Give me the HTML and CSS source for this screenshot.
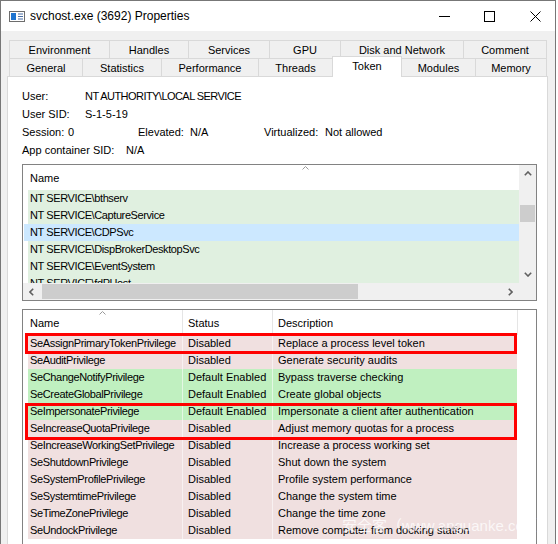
FILE: index.html
```html
<!DOCTYPE html>
<html lang="en">
<head>
    <meta charset="UTF-8">
    <title>svchost.exe (3692) Properties</title>
    <link rel="stylesheet" href="styles.css">
</head>
<body>
<div class="window">
    <div class="titlebar">
        <svg class="app-icon" width="16" height="11" viewBox="0 0 16 11">
            <rect x="0.5" y="0.5" width="15" height="10" fill="#fff" stroke="#6d6d6d"/>
            <rect x="2" y="2" width="5" height="7" fill="#1f74d0"/>
            <rect x="9" y="2.5" width="5" height="1" fill="#4a6fa5"/>
            <rect x="9" y="5" width="5" height="1" fill="#4a6fa5"/>
            <rect x="9" y="7.5" width="5" height="1" fill="#4a6fa5"/>
        </svg>
        <span class="title">svchost.exe (3692) Properties</span>
        <div class="controls">
            <svg width="11" height="11" viewBox="0 0 11 11"><line x1="0" y1="5.5" x2="11" y2="5.5" stroke="#000"/></svg>
            <svg width="11" height="11" viewBox="0 0 11 11"><rect x="0.5" y="0.5" width="10" height="10" fill="none" stroke="#000"/></svg>
            <svg width="11" height="11" viewBox="0 0 11 11"><path d="M0.5 0.5 L10.5 10.5 M10.5 0.5 L0.5 10.5" stroke="#000"/></svg>
        </div>
    </div>

    <div class="client">
        <div class="tabs">
            <div class="tab-row">
                <div class="tab w-env">Environment</div>
                <div class="tab w-handles">Handles</div>
                <div class="tab w-services">Services</div>
                <div class="tab w-gpu">GPU</div>
                <div class="tab w-disk">Disk and Network</div>
                <div class="tab w-comment last">Comment</div>
            </div>
            <div class="tab-row">
                <div class="tab w-general">General</div>
                <div class="tab w-stats">Statistics</div>
                <div class="tab w-perf">Performance</div>
                <div class="tab w-threads">Threads</div>
                <div class="tab w-token active">Token</div>
                <div class="tab w-modules">Modules</div>
                <div class="tab w-memory last">Memory</div>
            </div>
        </div>

        <div class="panel">
            <div class="info">
                <div class="info-row"><span class="lbl-user">User:</span><span class="caps">NT AUTHORITY\LOCAL SERVICE</span></div>
                <div class="info-row"><span class="lbl-user">User SID:</span><span>S-1-5-19</span></div>
                <div class="info-row">
                    <div class="grp-session"><span class="lbl-session">Session:</span><span>0</span></div>
                    <div class="grp-elev"><span class="lbl-elev">Elevated:</span><span>N/A</span></div>
                    <span class="lbl-virt">Virtualized:</span><span>Not allowed</span>
                </div>
                <div class="info-row"><span class="lbl-app">App container SID:</span><span>N/A</span></div>
            </div>

            <div class="listbox groups">
                <div class="list">
                    <div class="list-inner">
                        <div class="lv-header">
                            <span class="hdr-text">Name</span>
                            <svg class="sort-arrow" width="7" height="4" viewBox="0 0 7 4"><polyline points="0.5,3.5 3.5,0.5 6.5,3.5" fill="none" stroke="#9a9a9a"/></svg>
                        </div>
                        <div class="grow">NT SERVICE\bthserv</div>
                        <div class="grow">NT SERVICE\CaptureService</div>
                        <div class="grow sel">NT SERVICE\CDPSvc</div>
                        <div class="grow">NT SERVICE\DispBrokerDesktopSvc</div>
                        <div class="grow">NT SERVICE\EventSystem</div>
                        <div class="grow">NT SERVICE\fdPHost</div>
                    </div>
                </div>
                <div class="vscroll">
                    <div class="sb-btn">
                        <svg width="8" height="5" viewBox="0 0 8 5"><polyline points="0.8,4.2 4,1 7.2,4.2" fill="none" stroke="#606060" stroke-width="1.6"/></svg>
                    </div>
                    <div class="vthumb"></div>
                    <div class="sb-btn bottom">
                        <svg width="8" height="5" viewBox="0 0 8 5"><polyline points="0.8,0.8 4,4 7.2,0.8" fill="none" stroke="#606060" stroke-width="1.6"/></svg>
                    </div>
                </div>
                <div class="hscroll">
                    <div class="sb-btn">
                        <svg width="5" height="8" viewBox="0 0 5 8"><polyline points="4.2,0.8 1,4 4.2,7.2" fill="none" stroke="#606060" stroke-width="1.6"/></svg>
                    </div>
                    <div class="hthumb"></div>
                    <div class="sb-btn right">
                        <svg width="5" height="8" viewBox="0 0 5 8"><polyline points="0.8,0.8 4,4 0.8,7.2" fill="none" stroke="#606060" stroke-width="1.6"/></svg>
                    </div>
                </div>
                <div class="corner"></div>
            </div>

            <div class="listbox privs">
                <div class="pv-header">
                    <div class="hc name">Name
                        <svg class="sort-arrow" width="7" height="4" viewBox="0 0 7 4"><polyline points="0.5,3.5 3.5,0.5 6.5,3.5" fill="none" stroke="#9a9a9a"/></svg>
                    </div>
                    <div class="hc status">Status</div>
                    <div class="hc desc">Description</div>
                </div>
                <div class="prow off"><div class="c name">SeAssignPrimaryTokenPrivilege</div><div class="c status">Disabled</div><div class="c desc">Replace a process level token</div></div>
                <div class="prow off"><div class="c name">SeAuditPrivilege</div><div class="c status">Disabled</div><div class="c desc">Generate security audits</div></div>
                <div class="prow on"><div class="c name">SeChangeNotifyPrivilege</div><div class="c status">Default Enabled</div><div class="c desc">Bypass traverse checking</div></div>
                <div class="prow on"><div class="c name">SeCreateGlobalPrivilege</div><div class="c status">Default Enabled</div><div class="c desc">Create global objects</div></div>
                <div class="prow on"><div class="c name">SeImpersonatePrivilege</div><div class="c status">Default Enabled</div><div class="c desc">Impersonate a client after authentication</div></div>
                <div class="prow off"><div class="c name">SeIncreaseQuotaPrivilege</div><div class="c status">Disabled</div><div class="c desc">Adjust memory quotas for a process</div></div>
                <div class="prow off"><div class="c name">SeIncreaseWorkingSetPrivilege</div><div class="c status">Disabled</div><div class="c desc">Increase a process working set</div></div>
                <div class="prow off"><div class="c name">SeShutdownPrivilege</div><div class="c status">Disabled</div><div class="c desc">Shut down the system</div></div>
                <div class="prow off"><div class="c name">SeSystemProfilePrivilege</div><div class="c status">Disabled</div><div class="c desc">Profile system performance</div></div>
                <div class="prow off"><div class="c name">SeSystemtimePrivilege</div><div class="c status">Disabled</div><div class="c desc">Change the system time</div></div>
                <div class="prow off"><div class="c name">SeTimeZonePrivilege</div><div class="c status">Disabled</div><div class="c desc">Change the time zone</div></div>
                <div class="prow off"><div class="c name">SeUndockPrivilege</div><div class="c status">Disabled</div><div class="c desc">Remove computer from docking station</div></div>

                <div class="mark mark-1"></div>
                <div class="mark mark-2"></div>
            </div>
        </div>
    </div>

    <div class="watermark">安全客（www.anguanke.com）</div>
</div>
</body>
</html>
```

FILE: styles.css
```css
:root {
    --face: #f0f0f0;
    --tab-border: #d9d9d9;
    --list-border: #828282;
    --thumb: #cdcdcd;
    --group-on: #e0f0e0;
    --selected: #cce8ff;
    --priv-off: #f0e0e0;
    --priv-on: #c0f0c0;
}

html, body {
    margin: 0;
    padding: 0;
    background: #fff;
}

body {
    font-family: "Liberation Sans", Arial, sans-serif;
    font-size: 11px;
    color: #000;
}

.window {
    position: relative;
    width: 556px;
    height: 544px;
    box-sizing: border-box;
    border: 1px solid #777;
    border-bottom: none;
    display: flex;
    flex-direction: column;
    overflow: hidden;
}

/* title bar */
.titlebar {
    height: 30px;
    flex: none;
    display: flex;
    align-items: center;
    padding-left: 8px;
    background: #fff;
}

.app-icon {
    margin-top: 1px;
}

.title {
    margin-left: 5px;
    font-size: 12px;
}

.controls {
    margin-left: auto;
    display: flex;
    align-items: center;
    gap: 34px;
    padding-right: 14px;
}

.controls svg:last-child {
    margin-left: 1px;
}

/* client area */
.client {
    flex: 1;
    display: flex;
    flex-direction: column;
    background: var(--face);
    padding: 9px 7px 0 6px;
    min-height: 0;
}

.tabs {
    margin-left: 2px;
}

.tab-row {
    display: flex;
    height: 18px;
    align-items: flex-start;
}

.tab {
    height: 18px;
    box-sizing: border-box;
    border-top: 1px solid var(--tab-border);
    border-left: 1px solid var(--tab-border);
    display: flex;
    align-items: center;
    justify-content: center;
    white-space: nowrap;
}

.tab.last {
    border-right: 1px solid var(--tab-border);
}

.tab.active {
    position: relative;
    z-index: 1;
    height: 21px;
    margin-top: -2px;
    margin-right: -1px;
    padding-bottom: 2px;
    background: #fff;
    border-right: 1px solid var(--tab-border);
}

.w-env { width: 100px; }
.w-handles { width: 79px; }
.w-services { width: 81px; }
.w-gpu { width: 71px; }
.w-disk { width: 123px; }
.w-comment { width: 84px; }
.w-general { width: 73px; }
.w-stats { width: 79px; }
.w-perf { width: 97px; }
.w-threads { width: 74px; }
.w-token { width: 70px; }
.w-modules { width: 74px; }
.w-memory { width: 72px; }

.panel {
    flex: 1;
    min-height: 0;
    background: #fff;
    border: 1px solid var(--tab-border);
    border-bottom: none;
    padding: 10px 0 0 14px;
}

/* process info */
.info-row {
    display: flex;
    align-items: center;
    height: 18px;
    white-space: nowrap;
}

.caps {
    letter-spacing: -0.55px;
}

.lbl-user { width: 63px; }
.grp-session { width: 116px; display: flex; }
.lbl-session { width: 46px; }
.grp-elev { width: 126px; display: flex; }
.lbl-elev { width: 52px; }
.lbl-virt { width: 61px; }
.lbl-app { width: 104px; }

/* list views */
.listbox {
    width: 515px;
    box-sizing: border-box;
    border: 1px solid var(--list-border);
    background: #fff;
}

.groups {
    height: 137px;
    margin-top: 5px;
    display: grid;
    grid-template-columns: 1fr 17px;
    grid-template-rows: 1fr 17px;
}

.list {
    overflow: hidden;
}

.list-inner {
    width: 566px;
}

.lv-header {
    position: relative;
    height: 25px;
    display: flex;
    align-items: center;
    padding-left: 7px;
}

.sort-arrow {
    position: absolute;
    top: 1px;
    left: 50%;
    margin-left: -4px;
}

.grow {
    height: 17px;
    line-height: 17px;
    margin-left: 5px;
    padding-left: 2px;
    background: var(--group-on);
    white-space: nowrap;
    letter-spacing: -0.4px;
}

.grow.sel {
    margin-left: 1px;
    padding-left: 6px;
    background: var(--selected);
}

.vscroll,
.hscroll,
.corner {
    background: var(--face);
}

.vscroll {
    display: flex;
    flex-direction: column;
}

.hscroll {
    display: flex;
}

.sb-btn {
    width: 17px;
    height: 17px;
    flex: none;
    display: flex;
    align-items: center;
    justify-content: center;
}

.sb-btn.bottom {
    margin-top: auto;
}

.sb-btn.right {
    margin-left: auto;
}

.vthumb {
    width: 15px;
    height: 17px;
    margin: 23px 0 0 1px;
    background: var(--thumb);
}

.hthumb {
    width: 316px;
    height: 15px;
    margin: 1px 0 0 2px;
    background: var(--thumb);
}

/* privileges */
.privs {
    position: relative;
    height: 260px;
    margin-top: 8px;
}

.pv-header {
    display: flex;
    height: 25px;
}

.hc {
    box-sizing: border-box;
    border-right: 1px solid #e5e5e5;
    padding-left: 5px;
    display: flex;
    align-items: center;
}

.hc.name {
    position: relative;
    width: 160px;
    padding-left: 7px;
}

.hc.status { width: 90px; }
.hc.desc { width: 245px; }

.prow {
    display: flex;
    width: 490px;
    height: 17px;
    line-height: 17px;
    margin-left: 5px;
}

.prow.off { background: var(--priv-off); }
.prow.on { background: var(--priv-on); }

.c {
    box-sizing: border-box;
    border-right: 1px solid rgba(255, 255, 255, 0.55);
    padding-left: 5px;
    white-space: nowrap;
    overflow: hidden;
}

.c.name {
    width: 155px;
    padding-left: 2px;
    letter-spacing: -0.35px;
}

.c.status { width: 90px; }
.c.desc { width: 245px; border-right-color: #fff; }

.mark {
    position: absolute;
    left: 2px;
    width: 492px;
    box-sizing: border-box;
    border: 3px solid #ff0000;
}

.mark-1 {
    top: 23px;
    height: 21px;
}

.mark-2 {
    top: 93px;
    height: 37px;
}

.watermark {
    position: absolute;
    left: 341px;
    top: 515px;
    font-family: "Liberation Sans", "Noto Sans CJK SC", sans-serif;
    font-size: 15px;
    line-height: 20px;
    color: rgba(255, 255, 255, 0.75);
    white-space: nowrap;
}
```
